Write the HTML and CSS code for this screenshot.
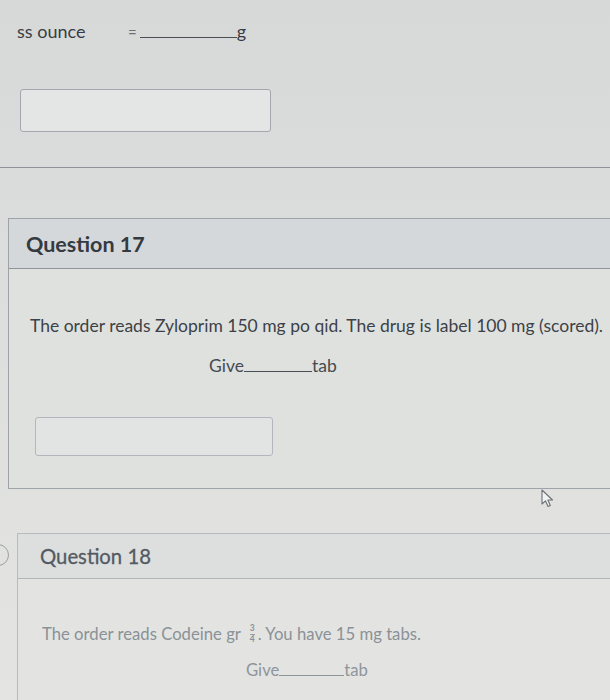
FILE: index.html
```html
<!DOCTYPE html>
<html>
<head>
<meta charset="utf-8">
<link rel="stylesheet" href="styles.css">
</head>
<body>
<div class="page">
  <section class="top">
    <div class="conv-row">
      <span class="unit">ss ounce</span>
      <span class="eq">=</span><span class="blank wide"></span><span class="g">g</span>
    </div>
    <div class="answer top-answer"></div>
  </section>
  <div class="divider"></div>

  <section class="question q17">
    <header class="q-head"><h2>Question 17</h2></header>
    <div class="q-body">
      <p class="q-text">The order reads Zyloprim 150 mg po qid. The drug is label 100 mg (scored).</p>
      <p class="give">Give<span class="blank"></span>tab</p>
      <div class="answer"></div>
    </div>
  </section>

  <section class="question q18">
    <span class="flag"></span>
    <header class="q-head"><h2>Question 18</h2></header>
    <div class="q-body">
      <p class="q-text">The order reads Codeine gr <span class="frac"><span>3</span><span>4</span></span>. You have 15 mg tabs.</p>
      <p class="give">Give<span class="blank"></span>tab</p>
    </div>
  </section>

  <svg class="cursor" width="14" height="20" viewBox="0 0 14 20">
    <path d="M1 1 L1 15 L4.5 11.8 L7 17.5 L9.3 16.5 L6.9 11 L11.5 11 Z" fill="#f2f2f0" stroke="#6b7178" stroke-width="1.1" stroke-linejoin="round"/>
  </svg>
</div>
</body>
</html>
```
FILE: styles.css
```css
html, body {
  margin: 0;
  padding: 0;
}
body {
  width: 610px;
  height: 700px;
  overflow: hidden;
  font-family: Lato, "Open Sans", "Liberation Sans", sans-serif;
  background: linear-gradient(180deg, #d7d9d9 0%, #dcdedd 40%, #e1e2df 75%, #e4e5e2 100%);
  color: #3b4046;
}
.page {
  position: relative;
  width: 610px;
  height: 700px;
}
.top {
  padding: 20px 0 0 17px;
}
.conv-row {
  font-size: 18px;
  line-height: 22px;
  height: 22px;
  display: flex;
  align-items: baseline;
  color: #383d43;
}
.unit {
  width: 111px;
}
.eq {
  color: #6c7278;
  font-size: 15px;
}
.blank {
  display: inline-block;
  border-bottom: 1px solid #4a4f55;
  height: 1px;
  width: 68px;
}
.blank.wide {
  width: 97px;
  margin-left: 3px;
}
.g {
  font-size: 18px;
}
.answer {
  box-sizing: border-box;
  width: 240px;
  height: 40px;
  border: 1px solid #a3a8ae;
  border-radius: 3px;
  background: #e2e4e3;
}
.top-answer {
  margin: 47px 0 0 3px;
  width: 251px;
  height: 43px;
  background: #e4e6e5;
}
.divider {
  margin-top: 35px;
  height: 1px;
  background: #8d9298;
}
.question {
  box-sizing: border-box;
  border: 1px solid #9ea3a9;
  border-right: none;
  position: relative;
}
.q17 {
  margin: 50px 0 0 8px;
}
.q-head {
  background: #d4d8db;
  border-bottom: 1px solid #8f949a;
  display: flex;
  align-items: center;
}
.q-head h2 {
  margin: 0;
  font-weight: 700;
}
.q17 .q-head {
  height: 49px;
  padding-left: 17px;
}
.q17 .q-head h2 {
  font-size: 21.5px;
  color: #343a40;
}
.q17 .q-body {
  padding: 45px 0 32px 21px;
  background: #dfe1df;
}
.q-text {
  margin: 0;
}
.q17 .q-text {
  font-size: 17.5px;
  line-height: 24px;
  color: #3c4147;
  white-space: nowrap;
}
.give {
  margin: 0;
  display: flex;
  align-items: baseline;
}
.q17 .give {
  margin-top: 16px;
  font-size: 17.5px;
  line-height: 24px;
  padding-left: 179px;
  color: #464b51;
}
.q17 .answer {
  margin: 39px 0 0 5px;
  width: 238px;
  height: 39px;
  border-color: #b3b7bd;
}
.q18 {
  margin: 44px 0 0 17px;
  border-color: #b7bbbf;
  border-bottom: none;
}
.q18 .q-head {
  height: 44px;
  padding-left: 22px;
  background: #dddfde;
  border-bottom-color: #b2b5b8;
}
.q18 .q-head h2 {
  font-size: 20.3px;
  font-weight: 400;
  color: #535a63;
  -webkit-text-stroke: 0.3px #535a63;
}
.q18 .q-body {
  padding: 43px 0 40px 24px;
  background: #e3e4e2;
}
.q18 .q-text {
  font-size: 16.7px;
  line-height: 24px;
  color: #8a9197;
  display: flex;
  align-items: center;
  white-space: pre;
}
.frac {
  display: inline-flex;
  flex-direction: column;
  font-size: 8.5px;
  line-height: 9.5px;
  font-weight: 700;
  text-align: center;
  margin: 0 3px 0 5px;
}
.frac span:first-child {
  border-bottom: 1px solid #9aa0a5;
}
.q18 .give {
  margin-top: 13px;
  font-size: 16.7px;
  line-height: 22px;
  color: #8e959b;
  padding-left: 204px;
}
.q18 .give .blank {
  width: 65px;
  border-bottom-color: #8e959b;
}
.flag {
  position: absolute;
  left: -31px;
  top: 10px;
  width: 20px;
  height: 20px;
  border: 1.5px solid #9aa0a6;
  border-radius: 50%;
}
.cursor {
  position: absolute;
  left: 541px;
  top: 489px;
}
```
